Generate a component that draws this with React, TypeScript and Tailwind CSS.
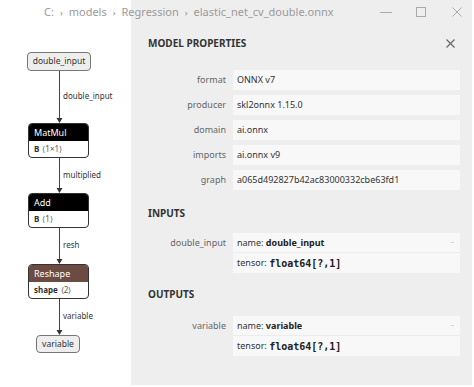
import React from "react";

const sans = { fontFamily: '"Noto Sans", "Open Sans", sans-serif' };
const mono = { fontFamily: '"DejaVu Sans Mono", "Liberation Mono", monospace' };

function PropRow({ label, value }: { label: string; value: string }) {
  return (
    <div className="flex items-center h-[20px]">
      <div className="w-[78px] text-right text-[9px] text-[#666] pr-0">{label}</div>
      <div className="ml-[7px] flex-1 h-full bg-[#f8f8f8] flex items-center pl-[4px] text-[9px] text-[#333]">
        {value}
      </div>
    </div>
  );
}

function ArgRow({ label, name }: { label: string; name: string }) {
  return (
    <div className="flex">
      <div className="w-[78px] h-[20px] flex items-center justify-end text-[9px] text-[#666]">{label}</div>
      <div className="ml-[7px] flex-1 bg-[#f8f8f8] flex flex-col">
        <div className="h-[20px] flex items-center pl-[4px] pr-[6px] text-[9px] text-[#333] border-b border-[#ececec]">
          <span>name:&nbsp;</span>
          <span className="font-bold text-[#222]">{name}</span>
          <span className="ml-auto text-[#bbb] text-[7px]">–</span>
        </div>
        <div className="h-[20px] flex items-center pl-[4px] text-[9px] text-[#333]">
          <span>tensor:&nbsp;</span>
          <span style={mono} className="text-[10px] font-bold text-[#222]">float64[?,1]</span>
        </div>
      </div>
    </div>
  );
}

function OpNode({
  top,
  title,
  attr,
  val,
  header,
}: {
  top: number;
  title: string;
  attr: string;
  val: string;
  header: string;
}) {
  return (
    <div
      className="absolute left-[28px] w-[61px] rounded-[4px] overflow-hidden border border-[#333] bg-white"
      style={{ top }}
    >
      <div className={`h-[17px] flex items-center pl-[5px] text-[9px] text-white ${header}`}>{title}</div>
      <div className="h-[16px] flex items-center pl-[5px] text-[8px] text-[#333]">
        <span className="font-bold">{attr}</span>
        <span className="ml-[3px] text-[#555]">{val}</span>
      </div>
    </div>
  );
}

function Graph() {
  const edges = [
    [71, 123],
    [158, 193],
    [228, 264],
    [299, 335],
  ];
  const labels: [number, string][] = [
    [97, "double_input"],
    [176, "multiplied"],
    [246, "resh"],
    [317, "variable"],
  ];
  return (
    <div className="relative w-[131px] h-full">
      <svg className="absolute left-0 top-0" width="131" height="387">
        {edges.map(([a, b], i) => (
          <g key={i}>
            <line x1="59.5" y1={a} x2="59.5" y2={b - 4} stroke="#444" strokeWidth="1" />
            <path d={`M56.5 ${b - 5} L62.5 ${b - 5} L59.5 ${b} Z`} fill="#333" />
          </g>
        ))}
      </svg>
      {labels.map(([y, t]) => (
        <div
          key={t}
          className="absolute left-[63px] text-[8px] text-[#333] leading-none"
          style={{ top: y - 5 }}
        >
          {t}
        </div>
      ))}
      <div className="absolute left-[27px] top-[52px] w-[64px] h-[19px] rounded-[4px] border border-[#777] bg-[#eee] flex items-center justify-center text-[8.5px] text-[#333]">
        double_input
      </div>
      <OpNode top={123} title="MatMul" attr="B" val="⟨1×1⟩" header="bg-black" />
      <OpNode top={193} title="Add" attr="B" val="⟨1⟩" header="bg-black" />
      <OpNode top={264} title="Reshape" attr="shape" val="⟨2⟩" header="bg-[#6c4c42]" />
      <div className="absolute left-[36px] top-[335px] w-[44px] h-[18px] rounded-[4px] border border-[#777] bg-[#eee] flex items-center justify-center text-[8.5px] text-[#333]">
        variable
      </div>
    </div>
  );
}

export default function App() {
  return (
    <div className="relative w-[474px] h-[387px] bg-white overflow-hidden" style={sans}>
      <div className="flex h-full">
        <Graph />
        <div className="w-[341px] h-[385px] bg-[#eeeeee] pt-[34px] pl-[17px] pr-[12px]">
          <div className="h-[18px] flex items-center justify-between">
            <div className="text-[10px] font-bold text-[#333]">MODEL PROPERTIES</div>
            <svg width="9" height="9" viewBox="0 0 9 9" className="mr-[5px]">
              <path d="M0.5 0.5 L8.5 8.5 M8.5 0.5 L0.5 8.5" stroke="#666" strokeWidth="1.2" />
            </svg>
          </div>
          <div className="mt-[18px] flex flex-col gap-[5px]">
            <PropRow label="format" value="ONNX v7" />
            <PropRow label="producer" value="skl2onnx 1.15.0" />
            <PropRow label="domain" value="ai.onnx" />
            <PropRow label="imports" value="ai.onnx v9" />
            <PropRow label="graph" value="a065d492827b42ac83000332cbe63fd1" />
          </div>
          <div className="mt-[16px] h-[14px] flex items-center text-[10px] font-bold text-[#333]">INPUTS</div>
          <div className="mt-[13px]">
            <ArgRow label="double_input" name="double_input" />
          </div>
          <div className="mt-[14px] h-[14px] flex items-center text-[10px] font-bold text-[#333]">OUTPUTS</div>
          <div className="mt-[15px]">
            <ArgRow label="variable" name="variable" />
          </div>
        </div>
      </div>
      <div className="absolute left-0 top-0 w-full h-[25px] flex items-center text-[11px] text-[#9a9a9a]">
        <div className="ml-[44px] flex items-center gap-[6px]">
          <span>C:</span>
          <span className="text-[9px] text-[#888]">›</span>
          <span>models</span>
          <span className="text-[9px] text-[#888]">›</span>
          <span>Regression</span>
          <span className="text-[9px] text-[#888]">›</span>
          <span>elastic_net_cv_double.onnx</span>
        </div>
        <div className="absolute left-[380px] top-[12px] w-[12px] h-px bg-[#aaa]" />
        <div className="absolute left-[416px] top-[7px] w-[10px] h-[10px] border border-[#aaa]" />
        <svg className="absolute left-[452px] top-[7px]" width="10" height="10" viewBox="0 0 10 10">
          <path d="M0.5 0.5 L9.5 9.5 M9.5 0.5 L0.5 9.5" stroke="#aaa" strokeWidth="1" />
        </svg>
      </div>
    </div>
  );
}
